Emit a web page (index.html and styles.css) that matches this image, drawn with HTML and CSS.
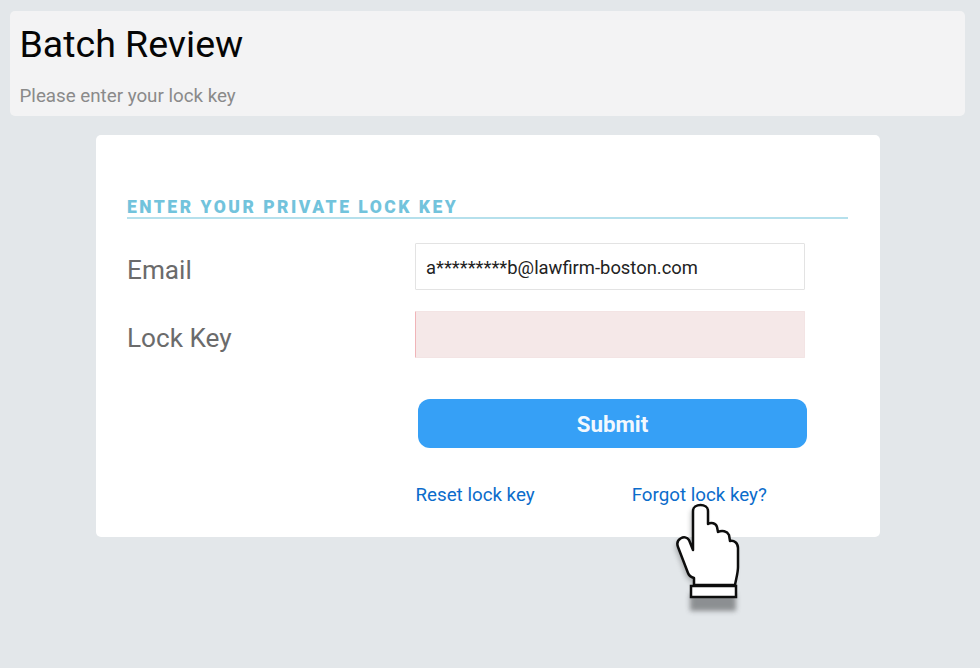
FILE: index.html
```html
<!DOCTYPE html>
<html lang="en">
<head>
<meta charset="utf-8">
<title>Batch Review</title>
<link rel="stylesheet" href="styles.css">
</head>
<body>
<header class="page-head">
  <h1 class="page-title">Batch Review</h1>
  <p class="page-sub">Please enter your lock key</p>
</header>
<main class="card">
  <h2 class="section-title">ENTER YOUR PRIVATE LOCK KEY</h2>
  <div class="form-row">
    <label class="form-label" for="email">Email</label>
    <input class="field" id="email" type="text" value="a*********b@lawfirm-boston.com">
  </div>
  <div class="form-row form-row-second">
    <label class="form-label" for="key">Lock Key</label>
    <input class="field field-error" id="key" type="text">
  </div>
  <button class="submit" type="button">Submit</button>
  <div class="links">
    <a class="link" href="#">Reset lock key</a>
    <a class="link" href="#">Forgot lock key?</a>
  </div>
</main>
<svg class="hand" viewBox="660 495 90 125" width="90" height="125" aria-hidden="true">
  <defs>
    <filter id="soft" x="-30%" y="-30%" width="160%" height="160%"><feGaussianBlur stdDeviation="2.5"/></filter>
  </defs>
  <rect x="690" y="593" width="46" height="18" fill="#6f7274" opacity=".75" filter="url(#soft)"/>
  <path d="M693 550V511c0-8 15-8 15 0V524c3-2 8-1 9 3l1 5c4-2 9-1 11 3l1 6c4-1 8 2 8 7V567c0 6-2 12-3 18H694v-7c-3-1-5-2-6-5L678 547c-3-8 7-13 11-7z" fill="#5f6264" opacity=".45" filter="url(#soft)" transform="translate(-2 3)"/>
  <path d="M693 550V511c0-8 15-8 15 0V524c3-2 8-1 9 3l1 5c4-2 9-1 11 3l1 6c4-1 8 2 8 7V567c0 6-2 12-3 18H694v-7c-3-1-5-2-6-5L678 547c-3-8 7-13 11-7z" fill="#fff" stroke="#0d0d0d" stroke-width="2.5" stroke-linejoin="round"/>
  <rect x="691" y="586" width="45" height="11" fill="#fff" stroke="#0d0d0d" stroke-width="2.5"/>
</svg>
</body>
</html>
```
FILE: styles.css
```css
* { box-sizing: border-box; }
html, body { margin: 0; padding: 0; }
body {
  width: 980px;
  height: 668px;
  overflow: hidden;
  position: relative;
  background: #e3e7ea;
  font-family: Roboto, "Liberation Sans", sans-serif;
  padding: 11px 15px 0 10px;
}
.page-head {
  height: 105px;
  background: #f3f3f4;
  border-radius: 5px;
  padding: 11px 10px 0 9.5px;
}
.page-title {
  margin: 0;
  font-size: 37.5px;
  line-height: 44px;
  font-weight: 400;
  color: #050505;
}
.page-sub {
  margin: 18px 0 0;
  font-size: 18.75px;
  line-height: 24px;
  color: #8a8a8a;
}
.card {
  width: 784px;
  height: 402px;
  margin: 19px 0 0 86px;
  background: #fff;
  border-radius: 5px;
  padding: 61px 32px 0 31px;
}
.section-title {
  margin: 0 0 24px;
  height: 23px;
  font-size: 17.5px;
  line-height: 22px;
  font-weight: 900;
  letter-spacing: 2.5px;
  color: #72c3dc;
  border-bottom: 2px solid #b5e0ec;
}
.form-row {
  display: flex;
  align-items: center;
  height: 47px;
}
.form-row-second { margin-top: 21px; }
.form-label {
  width: 288px;
  padding-top: 6px;
  font-size: 26.2px;
  color: #6b6b6b;
}
.field {
  width: 390px;
  height: 47px;
  padding: 2px 10px 0;
  border: 1px solid #e3e3e3;
  border-radius: 1px;
  background: #fff;
  font-family: Roboto, "Liberation Sans", sans-serif;
  font-size: 18.4px;
  color: #222;
  outline: none;
}
.field-error {
  background: #f5e8e8;
  border-color: #f3e4e4;
  border-left-color: #f0b4b8;
}
.submit {
  display: block;
  width: 389px;
  height: 49px;
  margin: 41px 0 0 291px;
  border: 0;
  border-radius: 12px;
  background: #36a0f6;
  color: #f2f8fe;
  font-family: Roboto, "Liberation Sans", sans-serif;
  font-size: 22.3px;
  font-weight: 700;
}
.links {
  display: flex;
  gap: 97px;
  margin: 35px 0 0 288.5px;
}
.link {
  font-size: 18.75px;
  line-height: 24px;
  color: #0b6ccb;
  text-decoration: none;
}
.hand {
  position: absolute;
  left: 660px;
  top: 495px;
}
```
